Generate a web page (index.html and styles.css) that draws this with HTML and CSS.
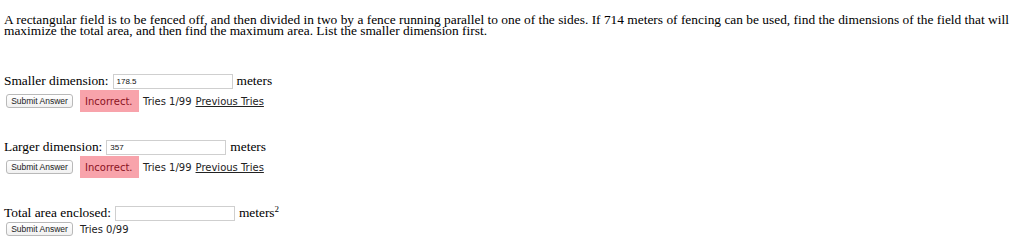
FILE: index.html
```html
<!DOCTYPE html>
<html>
<head>
<meta charset="utf-8">
<link rel="stylesheet" href="styles.css">
</head>
<body>
<p class="problem">A rectangular field is to be fenced off, and then divided in two by a fence running parallel to one of the sides. If 714 meters of fencing can be used, find the dimensions of the field that will maximize the total area, and then find the maximum area. List the smaller dimension first.</p>

<div class="question first">
  <div class="label-row">
    <span class="label">Smaller dimension:</span>
    <span class="input">178.5</span>
    <span class="unit">meters</span>
  </div>
  <div class="answer-row">
    <span class="btn">Submit Answer</span>
    <span class="incorrect">Incorrect.</span>
    <span class="tries">Tries 1/99</span>
    <span class="prev">Previous Tries</span>
  </div>
</div>

<div class="question">
  <div class="label-row">
    <span class="label">Larger dimension:</span>
    <span class="input">357</span>
    <span class="unit">meters</span>
  </div>
  <div class="answer-row">
    <span class="btn">Submit Answer</span>
    <span class="incorrect">Incorrect.</span>
    <span class="tries">Tries 1/99</span>
    <span class="prev">Previous Tries</span>
  </div>
</div>

<div class="question">
  <div class="label-row">
    <span class="label">Total area enclosed:</span>
    <span class="input"></span>
    <span class="unit">meters<sup>2</sup></span>
  </div>
  <div class="answer-row short">
    <span class="btn">Submit Answer</span>
    <span class="tries">Tries 0/99</span>
  </div>
</div>
</body>
</html>
```

FILE: styles.css
```css
html, body {
  margin: 0;
  padding: 0;
  background: #fff;
}
body {
  padding: 0 4px;
  font-family: "Liberation Serif", "Times New Roman", serif;
  font-size: 13.4px;
  color: #000;
}
.problem {
  margin: 14px 0 0 0;
  line-height: 11px;
}
.question {
  margin-top: 27px;
}
.question.first {
  margin-top: 37px;
}
.label-row {
  display: flex;
  align-items: center;
  height: 16px;
}
.label {
  white-space: nowrap;
}
.input {
  display: inline-block;
  box-sizing: border-box;
  width: 120px;
  height: 15px;
  margin-left: 4px;
  border: 1px solid #cfcfcf;
  font-family: "Liberation Sans", Arial, sans-serif;
  font-size: 8px;
  line-height: 13px;
  padding-left: 3px;
  color: #111;
}
.unit {
  margin-left: 4px;
}
.unit sup {
  font-size: 9px;
  line-height: 0;
  vertical-align: 5px;
}
.answer-row {
  display: flex;
  align-items: center;
  height: 22px;
  margin-top: 1px;
  font-family: "DejaVu Sans", Verdana, sans-serif;
  font-size: 10px;
  color: #222;
}
.answer-row.short {
  height: 16px;
  margin-top: 0;
}
.btn {
  box-sizing: border-box;
  display: inline-flex;
  align-items: center;
  justify-content: center;
  width: 67px;
  height: 14px;
  margin-left: 2px;
  border: 1px solid #b9b9b9;
  border-radius: 3px;
  background: linear-gradient(#ffffff, #f1f1f1);
  font-family: "Liberation Sans", Arial, sans-serif;
  font-size: 8.5px;
  color: #222;
}
.incorrect {
  display: inline-flex;
  align-items: center;
  box-sizing: border-box;
  height: 22px;
  width: 59px;
  margin-left: 7px;
  padding-left: 5px;
  background: #f8a3ab;
  color: #8a1222;
}
.tries {
  margin-left: 4px;
}
.short .tries {
  margin-left: 7px;
}
.prev {
  margin-left: 4px;
  text-decoration: underline;
}
```
